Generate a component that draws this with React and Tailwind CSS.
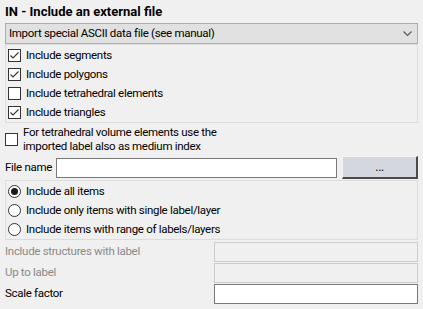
import React from 'react'

const font = { fontFamily: 'Roboto, "Noto Sans", sans-serif' }

function Check({ checked }) {
  return (
    <span className="w-[13px] h-[13px] shrink-0 border border-[#333333] bg-white flex items-center justify-center">
      {checked && (
        <svg width="11" height="11" viewBox="0 0 11 11">
          <polyline points="1.5,5.5 4,8 9.5,2.5" fill="none" stroke="#333333" strokeWidth="1.1" />
        </svg>
      )}
    </span>
  )
}

function Radio({ checked }) {
  return (
    <span className="w-[13px] h-[13px] shrink-0 rounded-full border border-[#333333] bg-white flex items-center justify-center">
      {checked && <span className="w-[7px] h-[7px] rounded-full bg-[#1a1a1a]" />}
    </span>
  )
}

function CheckRow({ label, checked }) {
  return (
    <div className="h-[19px] flex items-center gap-[5px] pl-[2px]">
      <Check checked={checked} />
      <span>{label}</span>
    </div>
  )
}

function RadioRow({ label, checked }) {
  return (
    <div className="h-[19px] flex items-center gap-[5px] pl-[2px]">
      <Radio checked={checked} />
      <span>{label}</span>
    </div>
  )
}

function FieldRow({ label, disabled }) {
  return (
    <div className="h-[20px] flex items-center justify-between">
      <span className={disabled ? 'text-[#8a8a8a]' : 'text-black'}>{label}</span>
      <div
        className={
          disabled
            ? 'w-[204px] h-[20px] border border-[#cccccc] bg-[#f0f0f0]'
            : 'w-[204px] h-[20px] border border-[#7a7a7a] bg-white'
        }
      />
    </div>
  )
}

export default function App() {
  return (
    <div className="w-[423px] h-[309px] bg-[#f0f0f0] px-[5px] text-[11.5px] tracking-[-0.3px] text-black leading-none whitespace-nowrap" style={font}>
      <div className="h-[23px] flex items-center font-bold text-[13px] tracking-normal">IN - Include an external file</div>

      <div className="h-[21px] border border-[#adadad] bg-[#e1e1e1] flex items-center justify-between pl-[3px] pr-[5px]">
        <span>Import special ASCII data file (see manual)</span>
        <svg width="9" height="6" viewBox="0 0 9 6">
          <polyline points="0.5,0.5 4.5,4.5 8.5,0.5" fill="none" stroke="#555555" strokeWidth="1.1" />
        </svg>
      </div>

      <div className="border border-[#dcdcdc] pt-[1px]">
        <CheckRow label="Include segments" checked />
        <CheckRow label="Include polygons" checked />
        <CheckRow label="Include tetrahedral elements" />
        <CheckRow label="Include triangles" checked />
      </div>

      <div className="flex items-center gap-[5px] mt-[2px] h-[28px]">
        <Check />
        <div className="leading-[14px]">
          <div>For tetrahedral volume elements use the</div>
          <div>imported label also as medium index</div>
        </div>
      </div>

      <div className="h-[23px] flex items-center mt-[3px]">
        <span className="w-[51px] shrink-0">File name</span>
        <div className="w-[282px] h-[20px] border border-[#7a7a7a] bg-white" />
        <button className="ml-[5px] w-[76px] h-[23px] bg-[#d4d7de] border-t border-l border-t-[#f4f4f4] border-l-[#f4f4f4] border-b-2 border-r-2 border-b-[#4a4a4a] border-r-[#4a4a4a] flex items-end justify-center pb-[4px] text-[12px]">
          ...
        </button>
      </div>

      <div className="border border-[#dcdcdc] pt-[1px] mt-[1px]">
        <RadioRow label="Include all items" checked />
        <RadioRow label="Include only items with single label/layer" />
        <RadioRow label="Include items with range of labels/layers" />
      </div>

      <div className="mt-[2px] flex flex-col gap-[1px]">
        <FieldRow label="Include structures with label" disabled />
        <FieldRow label="Up to label" disabled />
        <FieldRow label="Scale factor" />
      </div>
    </div>
  )
}
